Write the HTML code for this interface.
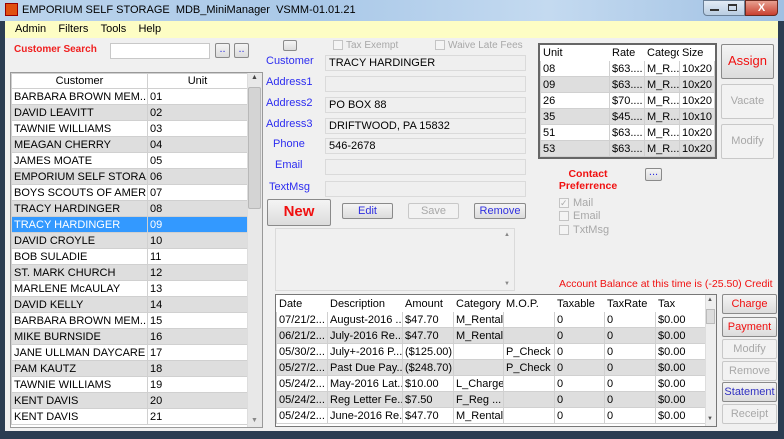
<!DOCTYPE html>
<html><head><meta charset="utf-8"><style>
*{box-sizing:border-box;margin:0;padding:0}
body{width:784px;height:439px;overflow:hidden;background:#2b3d52;font-family:"Liberation Sans",sans-serif;font-size:11px;color:#000;position:relative}
.a{position:absolute}
.title{left:0;top:0;width:784px;height:21px;background:linear-gradient(90deg,#bcd4ec,#a9c8e8 40%,#c4daf0 70%,#9fc0e3);}
.menu{left:5px;top:21px;width:773px;height:17px;background:#fdfdc4}
.body{left:5px;top:38px;width:773px;height:393px;background:#f0f0f0}
.btn{position:absolute;border:1px solid #8a8a8a;border-radius:2px;background:linear-gradient(#f4f4f4,#dcdcdc);text-align:center;font-size:11px}
.dis{border-color:#c8c8c8;background:#f2f2f2;color:#a8a8a8}
.tb{position:absolute;left:325px;width:201px;height:16px;background:#efefef;border:1px solid #dadada;padding:1px 0 0 3px;font-size:11px}
.lbl{position:absolute;color:#2d2df0;font-size:11px}
table{border-collapse:collapse;table-layout:fixed;position:absolute}
td,th{border:1px solid #d0d0d0;white-space:nowrap;overflow:hidden;font-weight:normal;text-align:left;padding:0 2px;font-size:11px}
tr.g td{background:#dedede}
tr.w td{background:#fff}
th{background:#fff;height:15px}
.chk{position:absolute;width:10px;height:10px;border:1px solid #c4c4c4;background:#f4f4f4}
.sb{position:absolute;background:#e8e8e8;border-left:1px solid #ddd}
</style></head><body>
<div class="a title"></div>
<div class="a" style="left:5px;top:3px;width:13px;height:13px;background:#e05010;border:1px solid #900"></div>
<div class="a" style="left:22px;top:4px;font-size:11px">EMPORIUM SELF STORAGE&nbsp; MDB_MiniManager&nbsp; VSMM-01.01.21</div>
<div class="a" style="left:703px;top:0;width:42px;height:16px;background:linear-gradient(#e2ebf5,#b8cde2);border:1px solid #6a7f96;border-radius:0 0 0 4px"></div>
<div class="a" style="left:710px;top:9px;width:9px;height:2px;background:#333"></div>
<div class="a" style="left:728px;top:4px;width:9px;height:7px;border:1px solid #333;border-top-width:2px"></div>
<div class="a" style="left:745px;top:0;width:33px;height:16px;background:linear-gradient(#e8a090,#c84030);border:1px solid #6a2a20;border-radius:0 0 4px 0;color:#fff;font-weight:bold;text-align:center;font-size:11px;line-height:14px">X</div>
<div class="a menu"></div>
<div class="a" style="left:15px;top:23px;font-size:11px;word-spacing:0">Admin&nbsp;&nbsp;&nbsp;&nbsp;Filters&nbsp;&nbsp;&nbsp;&nbsp;Tools&nbsp;&nbsp;&nbsp;&nbsp;Help</div>
<div class="a body"></div>

<div class="a" style="left:14px;top:44px;color:#f02020;font-weight:bold;font-size:10px">Customer Search</div>
<div class="a" style="left:110px;top:43px;width:100px;height:16px;background:#fff;border:1px solid #c8c8c8"></div>
<div class="btn" style="left:215px;top:43px;width:15px;height:15px;color:#3030e0;line-height:10px">..</div>
<div class="btn" style="left:234px;top:43px;width:15px;height:15px;color:#3030e0;line-height:10px">..</div>

<!-- left grid -->
<div class="a" style="left:10px;top:72px;width:253px;height:356px;background:#fff;border:1px solid #999"></div>
<table style="left:11px;top:73px;width:236px">
<colgroup><col style="width:136px"><col style="width:100px"></colgroup>
<tr><th style="text-align:center;height:14px">Customer</th><th style="text-align:center">Unit</th></tr>
<tbody style="font-size:11px">
<tr class="w"><td style="height:16px">BARBARA BROWN MEM...</td><td>01</td></tr>
<tr class="g"><td style="height:16px">DAVID LEAVITT</td><td>02</td></tr>
<tr class="w"><td style="height:16px">TAWNIE WILLIAMS</td><td>03</td></tr>
<tr class="g"><td style="height:16px">MEAGAN CHERRY</td><td>04</td></tr>
<tr class="w"><td style="height:16px">JAMES MOATE</td><td>05</td></tr>
<tr class="g"><td style="height:16px">EMPORIUM SELF STORA...</td><td>06</td></tr>
<tr class="w"><td style="height:16px">BOYS SCOUTS OF AMER...</td><td>07</td></tr>
<tr class="g"><td style="height:16px">TRACY HARDINGER</td><td>08</td></tr>
<tr><td style="height:16px;background:#3399ff;color:#fff">TRACY HARDINGER</td><td style="background:#3399ff;color:#fff">09</td></tr>
<tr class="g"><td style="height:16px">DAVID CROYLE</td><td>10</td></tr>
<tr class="w"><td style="height:16px">BOB SULADIE</td><td>11</td></tr>
<tr class="g"><td style="height:16px">ST. MARK CHURCH</td><td>12</td></tr>
<tr class="w"><td style="height:16px">MARLENE McAULAY</td><td>13</td></tr>
<tr class="g"><td style="height:16px">DAVID KELLY</td><td>14</td></tr>
<tr class="w"><td style="height:16px">BARBARA BROWN MEM...</td><td>15</td></tr>
<tr class="g"><td style="height:16px">MIKE BURNSIDE</td><td>16</td></tr>
<tr class="w"><td style="height:16px">JANE ULLMAN DAYCARE</td><td>17</td></tr>
<tr class="g"><td style="height:16px">PAM KAUTZ</td><td>18</td></tr>
<tr class="w"><td style="height:16px">TAWNIE WILLIAMS</td><td>19</td></tr>
<tr class="g"><td style="height:16px">KENT DAVIS</td><td>20</td></tr>
<tr class="w"><td style="height:16px">KENT DAVIS</td><td>21</td></tr>
</tbody></table>
<div class="sb" style="left:247px;top:73px;width:15px;height:354px"></div>
<div class="a" style="left:248px;top:87px;width:13px;height:122px;background:#d4d4d4;border:1px solid #b8b8b8;border-radius:2px"></div>
<div class="a" style="left:251px;top:74px;font-size:7px;color:#444">▲</div>
<div class="a" style="left:251px;top:417px;font-size:7px;color:#888">▼</div>

<!-- form -->
<div class="btn" style="left:283px;top:40px;width:14px;height:11px"></div>
<div class="chk" style="left:333px;top:40px"></div><div class="a" style="left:346px;top:40px;color:#a8a8a8;font-size:10px">Tax Exempt</div>
<div class="chk" style="left:435px;top:40px"></div><div class="a" style="left:448px;top:40px;color:#a8a8a8;font-size:10px">Waive Late Fees</div>
<div class="lbl" style="left:266px;top:55px">Customer</div><div class="tb" style="top:55px">TRACY HARDINGER</div>
<div class="lbl" style="left:266px;top:76px">Address1</div><div class="tb" style="top:76px"></div>
<div class="lbl" style="left:266px;top:97px">Address2</div><div class="tb" style="top:97px">PO BOX 88</div>
<div class="lbl" style="left:266px;top:118px">Address3</div><div class="tb" style="top:118px">DRIFTWOOD, PA 15832</div>
<div class="lbl" style="left:273px;top:138px">Phone</div><div class="tb" style="top:138px">546-2678</div>
<div class="lbl" style="left:275px;top:159px">Email</div><div class="tb" style="top:159px"></div>
<div class="lbl" style="left:269px;top:181px">TextMsg</div><div class="tb" style="top:181px"></div>
<div class="btn" style="left:267px;top:199px;width:64px;height:27px;color:#f01010;font-weight:bold;font-size:15px;line-height:24px">New</div>
<div class="btn" style="left:342px;top:203px;width:51px;height:16px;color:#3030e0;line-height:14px">Edit</div>
<div class="btn dis" style="left:408px;top:203px;width:51px;height:16px;line-height:14px">Save</div>
<div class="btn" style="left:474px;top:203px;width:52px;height:16px;color:#3030e0;line-height:14px">Remove</div>
<div class="a" style="left:275px;top:228px;width:240px;height:63px;border:1px solid #dadada;background:#f0f0f0"></div>
<div class="a" style="left:504px;top:232px;font-size:6px;color:#888">▲</div>
<div class="a" style="left:504px;top:281px;font-size:6px;color:#888">▼</div>

<!-- units grid -->
<div class="a" style="left:538px;top:43px;width:179px;height:116px;background:#d8d8d8;border:2px solid #666"></div>
<table style="left:540px;top:45px;width:174px">
<colgroup><col style="width:69px"><col style="width:35px"><col style="width:35px"><col style="width:35px"></colgroup>
<tr><th style="height:14px;border-color:#fff">Unit</th><th style="border-color:#fff">Rate</th><th style="border-color:#fff">Categor</th><th style="border-color:#fff">Size</th></tr>
<tr class="w"><td style="height:16px">08</td><td>$63....</td><td>M_R...</td><td>10x20</td></tr>
<tr class="g"><td style="height:16px">09</td><td>$63....</td><td>M_R...</td><td>10x20</td></tr>
<tr class="w"><td style="height:16px">26</td><td>$70....</td><td>M_R...</td><td>10x20</td></tr>
<tr class="g"><td style="height:16px">35</td><td>$45....</td><td>M_R...</td><td>10x10</td></tr>
<tr class="w"><td style="height:16px">51</td><td>$63....</td><td>M_R...</td><td>10x20</td></tr>
<tr class="g"><td style="height:16px">53</td><td>$63....</td><td>M_R...</td><td>10x20</td></tr>
</table>
<div class="btn" style="left:721px;top:44px;width:53px;height:35px;color:#f01010;font-size:13px;line-height:32px">Assign</div>
<div class="btn dis" style="left:721px;top:84px;width:53px;height:35px;line-height:32px">Vacate</div>
<div class="btn dis" style="left:721px;top:124px;width:53px;height:35px;line-height:32px">Modify</div>

<div class="a" style="left:558px;top:168px;width:60px;text-align:center;color:#f01010;font-weight:bold;font-size:10.5px;line-height:12px">Contact<br>Preferrence</div>
<div class="btn" style="left:645px;top:168px;width:17px;height:13px;color:#3030e0;line-height:6px">...</div>
<div class="chk" style="left:559px;top:198px;font-size:9px;color:#aaa;line-height:8px">✓</div><div class="a" style="left:573px;top:197px;color:#a8a8a8">Mail</div>
<div class="chk" style="left:559px;top:211px"></div><div class="a" style="left:573px;top:210px;color:#a8a8a8">Email</div>
<div class="chk" style="left:559px;top:225px"></div><div class="a" style="left:573px;top:224px;color:#a8a8a8">TxtMsg</div>
<div class="a" style="left:559px;top:278px;color:#f01010;font-size:10.5px">Account Balance at this time is (-25.50) Credit</div>

<!-- transactions -->
<div class="a" style="left:275px;top:294px;width:442px;height:133px;background:#fff;border:1px solid #777"></div>
<table style="left:276px;top:295px;width:429px">
<colgroup><col style="width:51px"><col style="width:75px"><col style="width:51px"><col style="width:50px"><col style="width:51px"><col style="width:50px"><col style="width:51px"><col style="width:50px"></colgroup>
<tr><th style="height:16px;border-color:#fff">Date</th><th style="border-color:#fff">Description</th><th style="border-color:#fff">Amount</th><th style="border-color:#fff">Category</th><th style="border-color:#fff">M.O.P.</th><th style="border-color:#fff">Taxable</th><th style="border-color:#fff">TaxRate</th><th style="border-color:#fff">Tax</th></tr>
<tr class="w"><td style="height:16px">07/21/2...</td><td>August-2016 ...</td><td>$47.70</td><td>M_Rental</td><td></td><td>0</td><td>0</td><td>$0.00</td></tr>
<tr class="g"><td style="height:16px">06/21/2...</td><td>July-2016 Re...</td><td>$47.70</td><td>M_Rental</td><td></td><td>0</td><td>0</td><td>$0.00</td></tr>
<tr class="w"><td style="height:16px">05/30/2...</td><td>July+-2016 P...</td><td>($125.00)</td><td></td><td>P_Check</td><td>0</td><td>0</td><td>$0.00</td></tr>
<tr class="g"><td style="height:16px">05/27/2...</td><td>Past Due Pay...</td><td>($248.70)</td><td></td><td>P_Check</td><td>0</td><td>0</td><td>$0.00</td></tr>
<tr class="w"><td style="height:16px">05/24/2...</td><td>May-2016 Lat...</td><td>$10.00</td><td>L_Charge</td><td></td><td>0</td><td>0</td><td>$0.00</td></tr>
<tr class="g"><td style="height:16px">05/24/2...</td><td>Reg Letter Fe...</td><td>$7.50</td><td>F_Reg ...</td><td></td><td>0</td><td>0</td><td>$0.00</td></tr>
<tr class="w"><td style="height:16px">05/24/2...</td><td>June-2016 Re...</td><td>$47.70</td><td>M_Rental</td><td></td><td>0</td><td>0</td><td>$0.00</td></tr>
</table>
<div class="sb" style="left:705px;top:295px;width:11px;height:131px;background:#eee"></div>
<div class="a" style="left:706px;top:309px;width:9px;height:15px;background:#ddd;border:1px solid #bbb"></div>
<div class="a" style="left:707px;top:297px;font-size:6px;color:#555">▲</div>
<div class="a" style="left:707px;top:416px;font-size:6px;color:#555">▼</div>

<div class="btn" style="left:722px;top:294px;width:55px;height:20px;color:#f01010;line-height:18px">Charge</div>
<div class="btn" style="left:722px;top:317px;width:55px;height:20px;color:#f01010;line-height:18px">Payment</div>
<div class="btn dis" style="left:722px;top:339px;width:55px;height:20px;line-height:18px">Modify</div>
<div class="btn dis" style="left:722px;top:361px;width:55px;height:20px;line-height:18px">Remove</div>
<div class="btn" style="left:722px;top:382px;width:55px;height:20px;color:#3030c0;line-height:18px">Statement</div>
<div class="btn dis" style="left:722px;top:404px;width:55px;height:20px;line-height:18px">Receipt</div>
</body></html>
